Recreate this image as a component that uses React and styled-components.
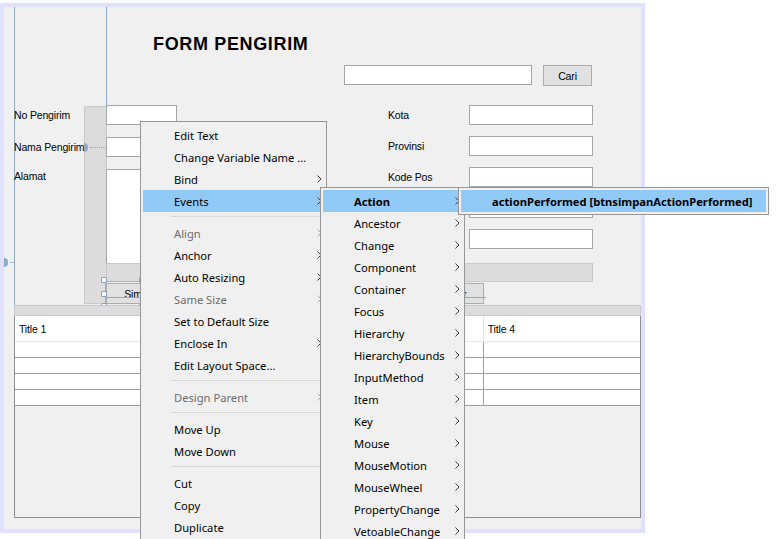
import React from "react";
import styled, { createGlobalStyle, css } from "styled-components";

const GlobalStyle = createGlobalStyle`
  html, body { margin: 0; padding: 0; background: #ffffff; }
  body { font-family: "Liberation Sans", Arial, sans-serif; color: #000; }
`;

const Stage = styled.div`
  position: relative;
  width: 779px;
  height: 539px;
  overflow: hidden;
  background: #ffffff;
`;

// the form being designed, drawn on the designer canvas
const Frame = styled.div`
  position: relative;
  margin-top: 3px;
  width: 637px;
  height: 522px;
  border: 4px solid #e0e0ff;
  background: #f0f0f0;
`;

// canvas coords are given in page pixels, the frame content starts at (4,7)
const place = css`
  position: absolute;
  box-sizing: border-box;
  left: ${(p) => p.$x - 4}px;
  top: ${(p) => p.$y - 7}px;
  width: ${(p) => (p.$w ? p.$w + "px" : "auto")};
  height: ${(p) => (p.$h ? p.$h + "px" : "auto")};
`;

const Guide = styled.div`
  ${place};
  background: #8eaacb;
`;

const Title = styled.div`
  ${place};
  font-size: 18px;
  line-height: 18px;
  font-weight: bold;
  letter-spacing: 0.65px;
  white-space: nowrap;
`;

const labelText = css`
  font-size: 10.5px;
  line-height: 14px;
  letter-spacing: -0.15px;
  white-space: nowrap;
`;

// label + field columns of the form
const FormGrid = styled.div`
  ${place};
  display: grid;
  grid-template-columns: ${(p) => p.$cols};
  grid-template-rows: ${(p) => p.$rows};
  row-gap: ${(p) => p.$gap}px;
  align-items: center;
`;

const FormLabel = styled.div`
  ${labelText};
  align-self: ${(p) => (p.$top ? "start" : "center")};
`;

const Input = styled.div`
  box-sizing: border-box;
  width: ${(p) => p.$w}px;
  height: 100%;
  background: #ffffff;
  border: 1px solid #a5a5a5;
`;

const Field = styled.div`
  ${place};
  background: #ffffff;
  border: 1px solid #a5a5a5;
`;

const GapArea = styled.div`
  ${place};
  background: #dcdcdc;
  border: 1px solid #c9c9c9;
`;

const Button = styled.div`
  ${place};
  display: flex;
  align-items: center;
  justify-content: center;
  background: #e1e1e1;
  border: 1px solid #adadad;
  font-size: 10.5px;
  letter-spacing: -0.15px;
`;

// orange selection box with its resize handles
const Selection = styled.div`
  ${place};
  border: 1px solid #f0a628;
`;

const Handle = styled.span`
  position: absolute;
  box-sizing: border-box;
  width: 6px;
  height: 6px;
  left: ${(p) => p.$left};
  top: ${(p) => p.$top};
  transform: translate(-50%, -50%);
  background: #f6f8fb;
  border: 1px solid #8aa0bf;
  border-radius: 1px;
`;

const handleSpots = [
  ["-2px", "-2px"], ["50%", "-2px"], ["calc(100% + 1px)", "-2px"],
  ["-2px", "50%"], ["calc(100% + 1px)", "50%"],
  ["-2px", "calc(100% + 1px)"], ["50%", "calc(100% + 1px)"], ["calc(100% + 1px)", "calc(100% + 1px)"],
];

const Anchor = styled.div`
  ${place};
  display: flex;
  align-items: center;
  &::before {
    content: "";
    width: 4px;
    height: 9px;
    border-radius: 0 5px 5px 0;
    background: #8eaacb;
  }
  &::after {
    content: "";
    flex: 1;
    margin-left: 2px;
    border-top: 1px dotted #8eaacb;
  }
`;

const TablePane = styled.div`
  ${place};
  border: 1px solid #8e8f8f;
  border-top: none;
  background: #f0f0f0;
`;

const TableRow = styled.div`
  display: grid;
  grid-template-columns: repeat(4, 1fr);
  height: ${(p) => (p.$head ? 25 : 15)}px;
  background: #ffffff;
  border-bottom: 1px solid ${(p) => (p.$head ? "#e5e5e5" : "#a0a0a0")};
`;

const Cell = styled.div`
  border-right: 1px solid ${(p) => (p.$head ? "#e5e5e5" : "#a0a0a0")};
  padding: 2px 0 0 4px;
  font-size: 10.5px;
  letter-spacing: -0.15px;
  line-height: 23px;
  &:last-child { border-right: none; }
`;

// popup menus
const Menu = styled.div`
  position: absolute;
  box-sizing: border-box;
  left: ${(p) => p.$x}px;
  top: ${(p) => p.$y}px;
  width: ${(p) => p.$w}px;
  padding: 2px;
  display: flex;
  flex-direction: column;
  background: #f0f0f0;
  border: 1px solid #979797;
  font-family: "Noto Sans", "Open Sans", sans-serif;
  font-size: 11.2px;
`;

const Item = styled.div`
  display: flex;
  align-items: center;
  height: 22px;
  flex: none;
  padding: 0 2px 0 31px;
  white-space: nowrap;
  background: ${(p) => (p.$active ? "#91c9f7" : "transparent")};
  color: ${(p) => (p.$disabled ? "#6d6d6d" : "#000")};
  font-weight: ${(p) => (p.$bold ? "bold" : "normal")};
`;

const ItemText = styled.span`
  flex: 1;
`;

const Separator = styled.div`
  flex: none;
  height: 1px;
  margin: 4px 0 5px 28px;
  background: #d7d7d7;
`;

const Arrow = ({ disabled }) => (
  <svg width="5" height="8" viewBox="0 0 5 8">
    <polyline
      points="0.5,0.5 4,4 0.5,7.5"
      fill="none"
      stroke={disabled ? "#a8a8a8" : "#3c3c3c"}
      strokeWidth="1"
    />
  </svg>
);

const mainMenu = [
  { t: "Edit Text" },
  { t: "Change Variable Name ..." },
  { t: "Bind", sub: true },
  { t: "Events", sub: true, active: true },
  "-",
  { t: "Align", sub: true, off: true },
  { t: "Anchor", sub: true },
  { t: "Auto Resizing", sub: true },
  { t: "Same Size", sub: true, off: true },
  { t: "Set to Default Size" },
  { t: "Enclose In", sub: true },
  { t: "Edit Layout Space..." },
  "-",
  { t: "Design Parent", sub: true, off: true },
  "-",
  { t: "Move Up" },
  { t: "Move Down" },
  "-",
  { t: "Cut" },
  { t: "Copy" },
  { t: "Duplicate" },
];

const eventMenu = [
  "Action", "Ancestor", "Change", "Component", "Container", "Focus",
  "Hierarchy", "HierarchyBounds", "InputMethod", "Item", "Key", "Mouse",
  "MouseMotion", "MouseWheel", "PropertyChange", "VetoableChange",
].map((t, i) => ({ t, sub: true, active: i === 0, bold: i === 0 }));

const MenuItems = ({ items }) =>
  items.map((it, i) =>
    it === "-" ? (
      <Separator key={i} />
    ) : (
      <Item key={i} $active={it.active} $disabled={it.off} $bold={it.bold}>
        <ItemText>{it.t}</ItemText>
        {it.sub && <Arrow disabled={it.off} />}
      </Item>
    )
  );

const rightFields = ["Kota", "Provinsi", "Kode Pos", "", ""];
const dataRows = [0, 1, 2, 3];

export default function App() {
  return (
    <Stage>
      <GlobalStyle />
      <Frame>
        <Guide $x={14} $y={7} $w={1} $h={298} />
        <Guide $x={106} $y={7} $w={1} $h={98} />

        <Title $x={153} $y={35}>FORM PENGIRIM</Title>

        <Field $x={344} $y={65} $w={188} $h={20} />
        <Button $x={543} $y={65} $w={49} $h={21}>Cari</Button>

        <GapArea $x={84} $y={106} $w={23} $h={198} />

        <FormGrid $x={14} $y={105} $cols="92px auto" $rows="20px 20px 95px" $gap={12}>
          <FormLabel>No Pengirim</FormLabel>
          <Input $w={71} />
          <FormLabel>Nama Pengirim</FormLabel>
          <Input $w={71} />
          <FormLabel $top>Alamat</FormLabel>
          <Input $w={200} />
        </FormGrid>

        <Anchor $x={84} $y={142} $w={22} $h={10} />
        <Anchor $x={4} $y={257} $w={10} $h={10} />

        <GapArea $x={106} $y={263} $w={487} $h={19} />

        <FormGrid $x={388} $y={105} $cols="81px 124px" $rows="repeat(5, 20px)" $gap={11}>
          {rightFields.map((t, i) => (
            <React.Fragment key={i}>
              <FormLabel>{t}</FormLabel>
              <Input $w={124} />
            </React.Fragment>
          ))}
        </FormGrid>

        <Button $x={106} $y={283} $w={71} $h={21}>Simpan</Button>
        <Button $x={420} $y={283} $w={64} $h={21}>Keluar</Button>
        <Guide $x={106} $y={297} $w={380} $h={1} />
        <Selection $x={105} $y={281} $w={73} $h={25}>
          {handleSpots.map(([l, t], i) => (
            <Handle key={i} $left={l} $top={t} />
          ))}
        </Selection>

        <GapArea $x={14} $y={305} $w={627} $h={11} />
        <TablePane $x={14} $y={316} $w={627} $h={202}>
          <TableRow $head>
            <Cell $head>Title 1</Cell>
            <Cell $head />
            <Cell $head />
            <Cell $head>Title 4</Cell>
          </TableRow>
          {dataRows.map((r) => (
            <TableRow key={r}>
              <Cell />
              <Cell />
              <Cell />
              <Cell />
            </TableRow>
          ))}
        </TablePane>
      </Frame>

      <Menu $x={140} $y={121} $w={187}>
        <MenuItems items={mainMenu} />
      </Menu>
      <Menu $x={320} $y={187} $w={145}>
        <MenuItems items={eventMenu} />
      </Menu>
      <Menu $x={458} $y={187} $w={311}>
        <Item $active $bold>actionPerformed [btnsimpanActionPerformed]</Item>
      </Menu>
    </Stage>
  );
}
